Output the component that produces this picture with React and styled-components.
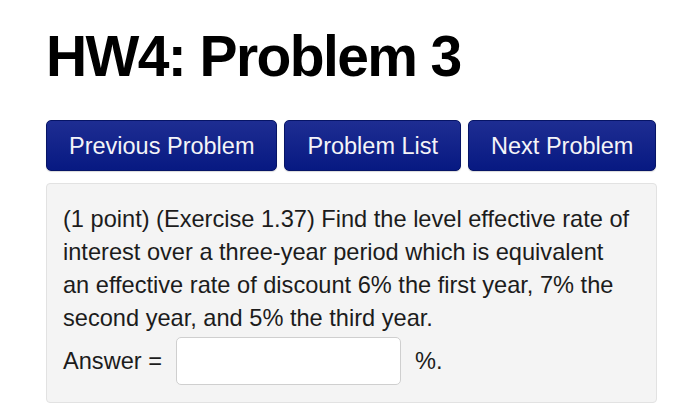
import React from "react";
import styled, { createGlobalStyle } from "styled-components";

const GlobalStyle = createGlobalStyle`
  html, body {
    margin: 0;
    padding: 0;
    background: #ffffff;
  }
  body {
    font-family: "Liberation Sans", Arial, Helvetica, sans-serif;
    color: #1c1c1c;
  }
`;

const App = () => {
  return (
    <Page>
      <GlobalStyle />
      <Title>HW4: Problem 3</Title>
      <NavRow>
        <NavButton>Previous Problem</NavButton>
        <NavButton>Problem List</NavButton>
        <NavButton>Next Problem</NavButton>
      </NavRow>
      <Panel>
        <Statement>
          (1 point) (Exercise 1.37) Find the level effective rate of
          <br />
          interest over a three-year period which is equivalent
          <br />
          an effective rate of discount 6% the first year, 7% the
          <br />
          second year, and 5% the third year.
        </Statement>
        <AnswerRow>
          <span>Answer =</span>
          <AnswerInput type="text" />
          <span>%.</span>
        </AnswerRow>
      </Panel>
    </Page>
  );
};

export default App;

const Page = styled.div`
  width: 611px;
  padding: 21px 0 0 46px;
`;

const Title = styled.h1`
  margin: 0;
  font-size: 57px;
  line-height: 70px;
  font-weight: bold;
  letter-spacing: -1.6px;
  color: #000;
`;

const NavRow = styled.div`
  display: flex;
  gap: 7px;
  margin-top: 29px;
`;

const NavButton = styled.button`
  height: 51px;
  padding: 0 22px;
  border: 1px solid #061466;
  border-radius: 5px;
  background: linear-gradient(#1e2d92, #071982);
  color: #f4f4f8;
  font-family: "Liberation Sans", Arial, Helvetica, sans-serif;
  font-size: 23.5px;
  padding-top: 2px;
  box-shadow: 0 1px 1px rgba(0, 0, 0, 0.15);
  cursor: pointer;
`;

const Panel = styled.div`
  margin-top: 12px;
  padding: 19px 16px 17px;
  background: #f4f4f4;
  border: 1px solid #e2e2e2;
  border-radius: 4px;
`;

const Statement = styled.p`
  margin: 0;
  font-size: 23.6px;
  line-height: 33px;
  color: #1c1c1c;
`;

const AnswerRow = styled.div`
  display: flex;
  align-items: center;
  gap: 14px;
  margin-top: 2px;
  font-size: 23.6px;
  color: #1c1c1c;
`;

const AnswerInput = styled.input`
  width: 225px;
  height: 48px;
  box-sizing: border-box;
  background: #fff;
  border: 1px solid #cfcfcf;
  border-radius: 5px;
  outline: none;
  font-size: 20px;
`;
